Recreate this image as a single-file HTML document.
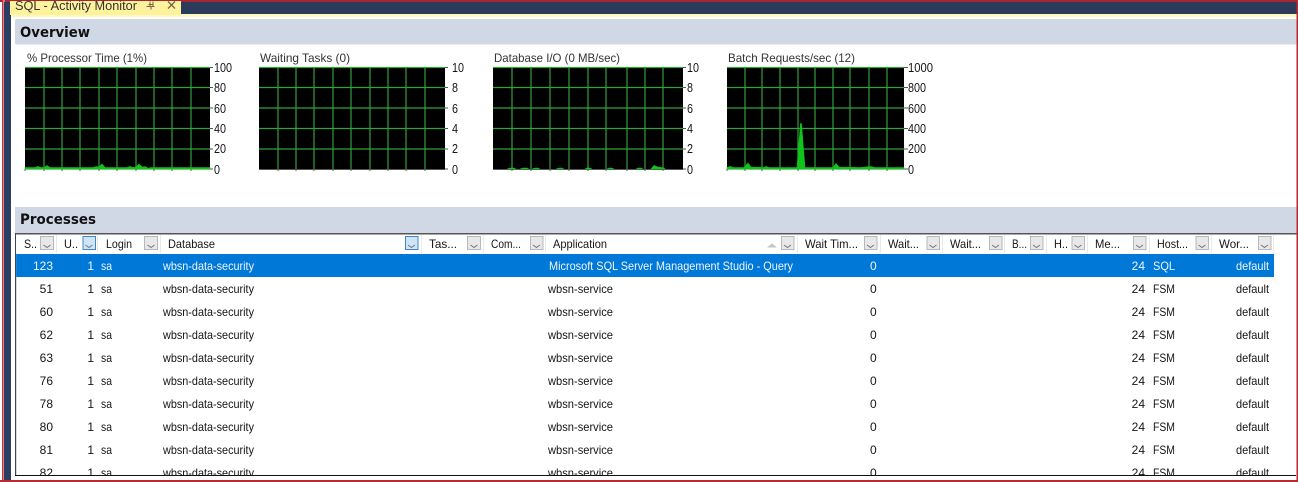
<!DOCTYPE html>
<html><head><meta charset="utf-8"><title>SQL - Activity Monitor</title>
<style>
html,body{margin:0;padding:0;background:#fff;width:1298px;height:482px;overflow:hidden}
svg{display:block;filter:blur(.3px)}
text{font-family:"Liberation Sans",sans-serif;font-size:12px;fill:#151515}
.w text{fill:#eef6fd}
.a{font-size:13px;fill:#151515}
.l{font-size:12px;fill:#333}
.b{font-family:"DejaVu Sans",sans-serif;font-size:14px;font-weight:bold;fill:#111}
.g{stroke:#33a038;stroke-width:1.2;fill:none}
.t{stroke:#555;stroke-width:1;fill:none}
.p{fill:#0fc41a;stroke:#0fc41a;stroke-width:.6}
.d{fill:#e8e8e8;stroke:#b8b8b8}
.e{fill:#cfe4f7;stroke:#3f88c5}
.c{fill:none;stroke:#777;stroke-width:1}
</style></head><body>
<svg width="1298" height="482" viewBox="0 0 1298 482" xmlns="http://www.w3.org/2000/svg">
<defs>
<clipPath id="ch"><rect x="0" y="0" width="1298" height="475"/></clipPath>
</defs>

<!-- window frame -->
<rect x="0" y="0" width="1298" height="2" fill="#a8252f"/>
<rect x="11" y="2" width="1286" height="12" fill="#2b3b5a"/>
<rect x="11" y="14" width="1286" height="3" fill="#fff8bd"/>
<rect x="2" y="0" width="1.500" height="482" fill="#c6353c"/>
<rect x="3.500" y="0" width="1" height="482" fill="#e8d8da"/>
<rect x="4" y="2" width="7" height="478" fill="#2b3d60"/>
<rect x="1296.500" y="0" width="1.500" height="482" fill="#b92a32"/>
<rect x="0" y="480" width="1298" height="2" fill="#b92a32"/>

<!-- tab -->
<rect x="10" y="1" width="171" height="14" fill="#fff29d"/>
<text x="15" y="10" textLength="122" lengthAdjust="spacingAndGlyphs" style="font-size:13px;fill:#333">SQL - Activity Monitor</text>
<path d="M148.500 4.500h5M150 1.500v5h3v-5M151 6.500v3M146.500 6.500h8" stroke="#6d674a" fill="none"/>
<path d="M168 1.500l7 7M175 1.500l-7 7" stroke="#6d674a" stroke-width="1.300" fill="none"/>

<!-- bands -->
<rect x="15" y="19" width="1281.500" height="25.500" rx="2" fill="#d0d7e5"/>
<text x="20" y="37" class="b" textLength="70" lengthAdjust="spacingAndGlyphs">Overview</text>
<rect x="15" y="207" width="1281.500" height="26" fill="#d0d7e5"/>
<text x="20" y="224" class="b" textLength="76" lengthAdjust="spacingAndGlyphs">Processes</text>

<!-- chart 1 -->
<text x="27" y="62" class="l" textLength="120" lengthAdjust="spacingAndGlyphs">% Processor Time (1%)</text>
<rect x="25" y="67" width="185" height="102" fill="#000"/>
<path class="g" d="M25 67.500H210M25 87.500H210M25 108H210M25 128.500H210M25 149H210M25 169H210M44 67V169M62 67V169M80 67V169M99 67V169M117 67V169M136 67V169M154 67V169M172 67V169M191 67V169"/>
<path class="t" d="M210 67.500h3M210 87.500h3M210 108h3M210 128.500h3M210 149h3M210 169h3M44 169v2M62 169v2M80 169v2M99 169v2M117 169v2M136 169v2M154 169v2M172 169v2M191 169v2M25 169v2"/>
<path class="p" d="M25 169V167.500H35L38 166.500 41 167.500 44 167.500 47 165.500 50 167.500H93L96 166.500 99 167 102 164 105 167.500H127L130 166.500 133 167.500 136 167 139 164 142 167 145 166.500 148 168H150V167.500H210V169Z"/>
<text x="214" y="72" class="a" textLength="18" lengthAdjust="spacingAndGlyphs">100</text><text x="214" y="92" class="a" textLength="12" lengthAdjust="spacingAndGlyphs">80</text><text x="214" y="113" class="a" textLength="12" lengthAdjust="spacingAndGlyphs">60</text><text x="214" y="133" class="a" textLength="12" lengthAdjust="spacingAndGlyphs">40</text><text x="214" y="153" class="a" textLength="12" lengthAdjust="spacingAndGlyphs">20</text><text x="214" y="174" class="a" textLength="6" lengthAdjust="spacingAndGlyphs">0</text>

<!-- chart 2 -->
<text x="260" y="62" class="l" textLength="90" lengthAdjust="spacingAndGlyphs">Waiting Tasks (0)</text>
<rect x="259" y="67" width="186" height="102" fill="#000"/>
<path class="g" d="M259 67.500H445M259 87.500H445M259 108H445M259 128.500H445M259 149H445M278 67V169M296 67V169M314 67V169M333 67V169M351 67V169M370 67V169M388 67V169M406 67V169M425 67V169"/>
<path stroke="#555" fill="none" d="M259 169.500H445"/>
<path class="t" d="M445 67.500h3M445 87.500h3M445 108h3M445 128.500h3M445 149h3M445 169h3M278 169v2M296 169v2M314 169v2M333 169v2M351 169v2M370 169v2M388 169v2M406 169v2M425 169v2"/>
<text x="452" y="72" class="a" textLength="12" lengthAdjust="spacingAndGlyphs">10</text><text x="452" y="92" class="a" textLength="6" lengthAdjust="spacingAndGlyphs">8</text><text x="452" y="113" class="a" textLength="6" lengthAdjust="spacingAndGlyphs">6</text><text x="452" y="133" class="a" textLength="6" lengthAdjust="spacingAndGlyphs">4</text><text x="452" y="153" class="a" textLength="6" lengthAdjust="spacingAndGlyphs">2</text><text x="452" y="174" class="a" textLength="6" lengthAdjust="spacingAndGlyphs">0</text>

<!-- chart 3 -->
<text x="494" y="62" class="l" textLength="126" lengthAdjust="spacingAndGlyphs">Database I/O (0 MB/sec)</text>
<rect x="493" y="67" width="190" height="102" fill="#000"/>
<path class="g" d="M493 67.500H683M493 87.500H683M493 108H683M493 128.500H683M493 149H683M512 67V169M531 67V169M550 67V169M569 67V169M588 67V169M606 67V169M627 67V169M645 67V169M663 67V169"/>
<path stroke="#555" fill="none" d="M493 169.500H683"/>
<path class="t" d="M683 67.500h3M683 87.500h3M683 108h3M683 128.500h3M683 149h3M683 169h3M512 169v2M531 169v2M550 169v2M569 169v2M588 169v2M606 169v2M627 169v2M645 169v2M663 169v2"/>
<path class="p" d="M507 169L510 168 514 168 516 169ZM520 169L523 168 527 168 529 169ZM532 169L535 168 538 168 540 169ZM556 169L559 168 562 168 564 169ZM585 169L587 168 590 168 592 169ZM607 169L609 168 612 168 614 169ZM636 169L638 168 641 168 643 169ZM651 169L654 165.500 658 167 664 168 665 169Z"/>
<text x="687" y="72" class="a" textLength="12" lengthAdjust="spacingAndGlyphs">10</text><text x="687" y="92" class="a" textLength="6" lengthAdjust="spacingAndGlyphs">8</text><text x="687" y="113" class="a" textLength="6" lengthAdjust="spacingAndGlyphs">6</text><text x="687" y="133" class="a" textLength="6" lengthAdjust="spacingAndGlyphs">4</text><text x="687" y="153" class="a" textLength="6" lengthAdjust="spacingAndGlyphs">2</text><text x="687" y="174" class="a" textLength="6" lengthAdjust="spacingAndGlyphs">0</text>

<!-- chart 4 -->
<text x="728" y="62" class="l" textLength="127" lengthAdjust="spacingAndGlyphs">Batch Requests/sec (12)</text>
<rect x="727" y="67" width="177" height="102" fill="#000"/>
<path class="g" d="M727 67.500H904M727 87.500H904M727 108H904M727 128.500H904M727 149H904M727 169H904M745 67V169M762 67V169M780 67V169M798 67V169M815 67V169M833 67V169M850 67V169M869 67V169M887 67V169"/>
<path class="t" d="M904 67.500h4M904 87.500h4M904 108h4M904 128.500h4M904 149h4M904 169h4M727 169v2M745 169v2M762 169v2M780 169v2M798 169v2M815 169v2M833 169v2M850 169v2M869 169v2M887 169v2"/>
<path class="p" d="M727 169V167.500L730 166.500 733 167.500H744L748 163 751 167 764 167.500 766 166.500 769 167.500H797L800.500 123.500H801.500L805 167.500H833L836 163.500 839 167 860 167.500 871 166.500 875 167.500H904V169Z"/>
<text x="908" y="72" class="a" textLength="25" lengthAdjust="spacingAndGlyphs">1000</text><text x="908" y="92" class="a" textLength="18" lengthAdjust="spacingAndGlyphs">800</text><text x="908" y="113" class="a" textLength="18" lengthAdjust="spacingAndGlyphs">600</text><text x="908" y="133" class="a" textLength="18" lengthAdjust="spacingAndGlyphs">400</text><text x="908" y="153" class="a" textLength="18" lengthAdjust="spacingAndGlyphs">200</text><text x="908" y="174" class="a" textLength="6" lengthAdjust="spacingAndGlyphs">0</text>

<!-- table frame -->
<rect x="15" y="233" width="1281.500" height="1.500" fill="#555"/>
<rect x="15" y="233" width="1.200" height="243" fill="#444"/>
<rect x="15" y="475" width="1281" height="1" fill="#111"/>

<!-- header -->
<rect x="16" y="234.500" width="1258" height="19" fill="#fff"/>
<path stroke="#e9e9e9" fill="none" d="M56.500 235v18M97.500 235v18M160.500 235v18M421.500 235v18M483.500 235v18M545.500 235v18M797.500 235v18M880.500 235v18M942.500 235v18M1004.500 235v18M1046.500 235v18M1087.500 235v18M1149.500 235v18M1211.500 235v18M1273.500 235v18"/>
<text x="24" y="248" textLength="13" lengthAdjust="spacingAndGlyphs">S..</text>
<text x="64" y="248" textLength="14" lengthAdjust="spacingAndGlyphs">U..</text>
<text x="106" y="248" textLength="26" lengthAdjust="spacingAndGlyphs">Login</text>
<text x="168" y="248" textLength="47" lengthAdjust="spacingAndGlyphs">Database</text>
<text x="429" y="248" textLength="28" lengthAdjust="spacingAndGlyphs">Tas...</text>
<text x="491" y="248" textLength="30" lengthAdjust="spacingAndGlyphs">Com...</text>
<text x="553" y="248" textLength="54" lengthAdjust="spacingAndGlyphs">Application</text>
<text x="805" y="248" textLength="53" lengthAdjust="spacingAndGlyphs">Wait Tim...</text>
<text x="888" y="248" textLength="31" lengthAdjust="spacingAndGlyphs">Wait...</text>
<text x="950" y="248" textLength="31" lengthAdjust="spacingAndGlyphs">Wait...</text>
<text x="1012" y="248" textLength="15" lengthAdjust="spacingAndGlyphs">B...</text>
<text x="1054" y="248" textLength="14" lengthAdjust="spacingAndGlyphs">H..</text>
<text x="1095" y="248" textLength="25" lengthAdjust="spacingAndGlyphs">Me...</text>
<text x="1157" y="248" textLength="31" lengthAdjust="spacingAndGlyphs">Host...</text>
<text x="1219" y="248" textLength="30" lengthAdjust="spacingAndGlyphs">Wor...</text>

<rect class="d" x="40.500" y="236.500" width="13" height="13"/><path class="c" d="M43.500 245l3.500 2.500 3.500-2.500"/>
<rect class="e" x="83" y="236.500" width="12.500" height="13"/><path class="c" d="M85.500 245l3.500 2.500 3.500-2.500"/>
<rect class="d" x="144.500" y="236.500" width="13" height="13"/><path class="c" d="M147.500 245l3.500 2.500 3.500-2.500"/>
<rect class="e" x="405.500" y="236.500" width="12.500" height="13"/><path class="c" d="M408 245l3.500 2.500 3.500-2.500"/>
<rect class="d" x="467.500" y="236.500" width="13" height="13"/><path class="c" d="M470.500 245l3.500 2.500 3.500-2.500"/>
<rect class="d" x="530.500" y="236.500" width="12.500" height="13"/><path class="c" d="M533 245l3.500 2.500 3.500-2.500"/>
<path d="M767 247.500l5-4 5 4z" fill="#c4c4c4"/>
<rect class="d" x="781.500" y="236.500" width="12.500" height="13"/><path class="c" d="M784 245l3.500 2.500 3.500-2.500"/>
<rect class="d" x="864.500" y="236.500" width="12.500" height="13"/><path class="c" d="M867 245l3.500 2.500 3.500-2.500"/>
<rect class="d" x="927" y="236.500" width="12.500" height="13"/><path class="c" d="M929.500 245l3.500 2.500 3.500-2.500"/>
<rect class="d" x="989.500" y="236.500" width="12.500" height="13"/><path class="c" d="M992 245l3.500 2.500 3.500-2.500"/>
<rect class="d" x="1030.500" y="236.500" width="12.500" height="13"/><path class="c" d="M1033 245l3.500 2.500 3.500-2.500"/>
<rect class="d" x="1072" y="236.500" width="12.500" height="13"/><path class="c" d="M1074.500 245l3.500 2.500 3.500-2.500"/>
<rect class="d" x="1133.500" y="236.500" width="12.500" height="13"/><path class="c" d="M1136 245l3.500 2.500 3.500-2.500"/>
<rect class="d" x="1196" y="236.500" width="12.500" height="13"/><path class="c" d="M1198.500 245l3.500 2.500 3.500-2.500"/>
<rect class="d" x="1258.500" y="236.500" width="12.500" height="13"/><path class="c" d="M1261 245l3.500 2.500 3.500-2.500"/>

<!-- selected row -->
<rect x="16.200" y="254" width="1257.800" height="23" fill="#0078d7"/>
<g class="w">
<text x="53" y="270" text-anchor="end">123</text><text x="94" y="270" text-anchor="end">1</text><text x="101" y="270" textLength="11" lengthAdjust="spacingAndGlyphs">sa</text><text x="163" y="270" textLength="91" lengthAdjust="spacingAndGlyphs">wbsn-data-security</text><text x="549" y="270" textLength="244" lengthAdjust="spacingAndGlyphs">Microsoft SQL Server Management Studio - Query</text><text x="870" y="270">0</text><text x="1145" y="270" text-anchor="end">24</text><text x="1153" y="270" textLength="22" lengthAdjust="spacingAndGlyphs">SQL</text><text x="1236" y="270" textLength="33" lengthAdjust="spacingAndGlyphs">default</text>
</g>

<!-- rows -->
<g clip-path="url(#ch)">
<text x="53" y="293" text-anchor="end">51</text><text x="94" y="293" text-anchor="end">1</text><text x="101" y="293" textLength="11" lengthAdjust="spacingAndGlyphs">sa</text><text x="163" y="293" textLength="91" lengthAdjust="spacingAndGlyphs">wbsn-data-security</text><text x="548" y="293" textLength="65" lengthAdjust="spacingAndGlyphs">wbsn-service</text><text x="870" y="293">0</text><text x="1145" y="293" text-anchor="end">24</text><text x="1153" y="293" textLength="22" lengthAdjust="spacingAndGlyphs">FSM</text><text x="1236" y="293" textLength="33" lengthAdjust="spacingAndGlyphs">default</text>
<text x="53" y="316" text-anchor="end">60</text><text x="94" y="316" text-anchor="end">1</text><text x="101" y="316" textLength="11" lengthAdjust="spacingAndGlyphs">sa</text><text x="163" y="316" textLength="91" lengthAdjust="spacingAndGlyphs">wbsn-data-security</text><text x="548" y="316" textLength="65" lengthAdjust="spacingAndGlyphs">wbsn-service</text><text x="870" y="316">0</text><text x="1145" y="316" text-anchor="end">24</text><text x="1153" y="316" textLength="22" lengthAdjust="spacingAndGlyphs">FSM</text><text x="1236" y="316" textLength="33" lengthAdjust="spacingAndGlyphs">default</text>
<text x="53" y="339" text-anchor="end">62</text><text x="94" y="339" text-anchor="end">1</text><text x="101" y="339" textLength="11" lengthAdjust="spacingAndGlyphs">sa</text><text x="163" y="339" textLength="91" lengthAdjust="spacingAndGlyphs">wbsn-data-security</text><text x="548" y="339" textLength="65" lengthAdjust="spacingAndGlyphs">wbsn-service</text><text x="870" y="339">0</text><text x="1145" y="339" text-anchor="end">24</text><text x="1153" y="339" textLength="22" lengthAdjust="spacingAndGlyphs">FSM</text><text x="1236" y="339" textLength="33" lengthAdjust="spacingAndGlyphs">default</text>
<text x="53" y="362" text-anchor="end">63</text><text x="94" y="362" text-anchor="end">1</text><text x="101" y="362" textLength="11" lengthAdjust="spacingAndGlyphs">sa</text><text x="163" y="362" textLength="91" lengthAdjust="spacingAndGlyphs">wbsn-data-security</text><text x="548" y="362" textLength="65" lengthAdjust="spacingAndGlyphs">wbsn-service</text><text x="870" y="362">0</text><text x="1145" y="362" text-anchor="end">24</text><text x="1153" y="362" textLength="22" lengthAdjust="spacingAndGlyphs">FSM</text><text x="1236" y="362" textLength="33" lengthAdjust="spacingAndGlyphs">default</text>
<text x="53" y="385" text-anchor="end">76</text><text x="94" y="385" text-anchor="end">1</text><text x="101" y="385" textLength="11" lengthAdjust="spacingAndGlyphs">sa</text><text x="163" y="385" textLength="91" lengthAdjust="spacingAndGlyphs">wbsn-data-security</text><text x="548" y="385" textLength="65" lengthAdjust="spacingAndGlyphs">wbsn-service</text><text x="870" y="385">0</text><text x="1145" y="385" text-anchor="end">24</text><text x="1153" y="385" textLength="22" lengthAdjust="spacingAndGlyphs">FSM</text><text x="1236" y="385" textLength="33" lengthAdjust="spacingAndGlyphs">default</text>
<text x="53" y="408" text-anchor="end">78</text><text x="94" y="408" text-anchor="end">1</text><text x="101" y="408" textLength="11" lengthAdjust="spacingAndGlyphs">sa</text><text x="163" y="408" textLength="91" lengthAdjust="spacingAndGlyphs">wbsn-data-security</text><text x="548" y="408" textLength="65" lengthAdjust="spacingAndGlyphs">wbsn-service</text><text x="870" y="408">0</text><text x="1145" y="408" text-anchor="end">24</text><text x="1153" y="408" textLength="22" lengthAdjust="spacingAndGlyphs">FSM</text><text x="1236" y="408" textLength="33" lengthAdjust="spacingAndGlyphs">default</text>
<text x="53" y="431" text-anchor="end">80</text><text x="94" y="431" text-anchor="end">1</text><text x="101" y="431" textLength="11" lengthAdjust="spacingAndGlyphs">sa</text><text x="163" y="431" textLength="91" lengthAdjust="spacingAndGlyphs">wbsn-data-security</text><text x="548" y="431" textLength="65" lengthAdjust="spacingAndGlyphs">wbsn-service</text><text x="870" y="431">0</text><text x="1145" y="431" text-anchor="end">24</text><text x="1153" y="431" textLength="22" lengthAdjust="spacingAndGlyphs">FSM</text><text x="1236" y="431" textLength="33" lengthAdjust="spacingAndGlyphs">default</text>
<text x="53" y="454" text-anchor="end">81</text><text x="94" y="454" text-anchor="end">1</text><text x="101" y="454" textLength="11" lengthAdjust="spacingAndGlyphs">sa</text><text x="163" y="454" textLength="91" lengthAdjust="spacingAndGlyphs">wbsn-data-security</text><text x="548" y="454" textLength="65" lengthAdjust="spacingAndGlyphs">wbsn-service</text><text x="870" y="454">0</text><text x="1145" y="454" text-anchor="end">24</text><text x="1153" y="454" textLength="22" lengthAdjust="spacingAndGlyphs">FSM</text><text x="1236" y="454" textLength="33" lengthAdjust="spacingAndGlyphs">default</text>
<text x="53" y="477" text-anchor="end">82</text><text x="94" y="477" text-anchor="end">1</text><text x="101" y="477" textLength="11" lengthAdjust="spacingAndGlyphs">sa</text><text x="163" y="477" textLength="91" lengthAdjust="spacingAndGlyphs">wbsn-data-security</text><text x="548" y="477" textLength="65" lengthAdjust="spacingAndGlyphs">wbsn-service</text><text x="870" y="477">0</text><text x="1145" y="477" text-anchor="end">24</text><text x="1153" y="477" textLength="22" lengthAdjust="spacingAndGlyphs">FSM</text><text x="1236" y="477" textLength="33" lengthAdjust="spacingAndGlyphs">default</text>
</g>
</svg>
</body></html>
